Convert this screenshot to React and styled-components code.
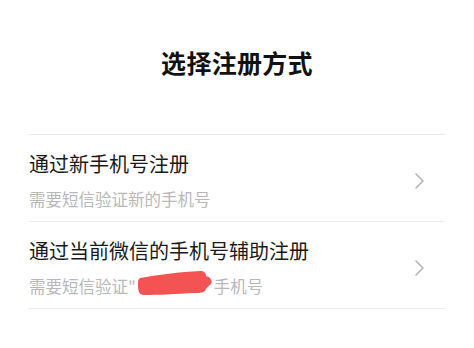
import React from "react";
import styled, { createGlobalStyle } from "styled-components";

const Global = createGlobalStyle`
  html, body { margin: 0; padding: 0; background: #fff; }
  body { font-family: "Noto Sans CJK SC", "Noto Sans", sans-serif; }
`;

const Page = styled.div`
  width: 474px;
  height: 348px;
  background: #fff;
  padding-top: 45px;
  box-sizing: border-box;
`;

const Title = styled.h1`
  margin: 0 0 55px;
  text-align: center;
  font-size: 25px;
  line-height: 34px;
  font-weight: 700;
  color: #111;
  letter-spacing: 0.3px;
`;

const List = styled.div`
  margin: 0 29px 0 28px;
  border-top: 1px solid #ececec;
`;

const Row = styled.div`
  display: flex;
  align-items: center;
  border-bottom: 1px solid #ececec;
  padding: 17px 20px 11px 1px;
`;

const Texts = styled.div`
  flex: 1;
  display: flex;
  flex-direction: column;
  gap: 12px;
`;

const RowTitle = styled.div`
  font-size: 20px;
  line-height: 24px;
  color: #1a1a1a;
`;

const RowSub = styled.div`
  font-size: 16.5px;
  line-height: 22px;
  color: #b8b8b8;
  white-space: nowrap;
`;

const Redacted = styled.span`
  position: relative;
  display: inline-block;
  width: 78px;
  height: 22px;
  vertical-align: top;
`;

const Scribble = styled.svg`
  position: absolute;
  left: 0;
  top: -8px;
  width: 80px;
  height: 30px;
`;

const Chevron = () => (
  <svg width="11" height="18" viewBox="0 0 11 18">
    <path d="M2 2 L9 9 L2 16" fill="none" stroke="#b5b5b5" strokeWidth="1.6" strokeLinecap="round" strokeLinejoin="round" />
  </svg>
);

export default function App() {
  return (
    <>
      <Global />
      <Page>
        <Title>选择注册方式</Title>
        <List>
          <Row>
            <Texts>
              <RowTitle>通过新手机号注册</RowTitle>
              <RowSub>需要短信验证新的手机号</RowSub>
            </Texts>
            <Chevron />
          </Row>
          <Row>
            <Texts>
              <RowTitle>通过当前微信的手机号辅助注册</RowTitle>
              <RowSub>
                需要短信验证"
                <Redacted>
                  <Scribble viewBox="0 0 80 30">
                    <path
                      d="M4 11 C20 8 45 5 64 4 C68 4 70 6 70 9 C74 10 77 13 75 17 C73 19 71 20 70 22 C69 25 66 26 60 26 C40 27 20 28 8 28 C3 28 2 24 2 18 C2 14 2 12 4 11 Z"
                      fill="#f45353"
                    />
                  </Scribble>
                </Redacted>
                手机号
              </RowSub>
            </Texts>
            <Chevron />
          </Row>
        </List>
      </Page>
    </>
  );
}
